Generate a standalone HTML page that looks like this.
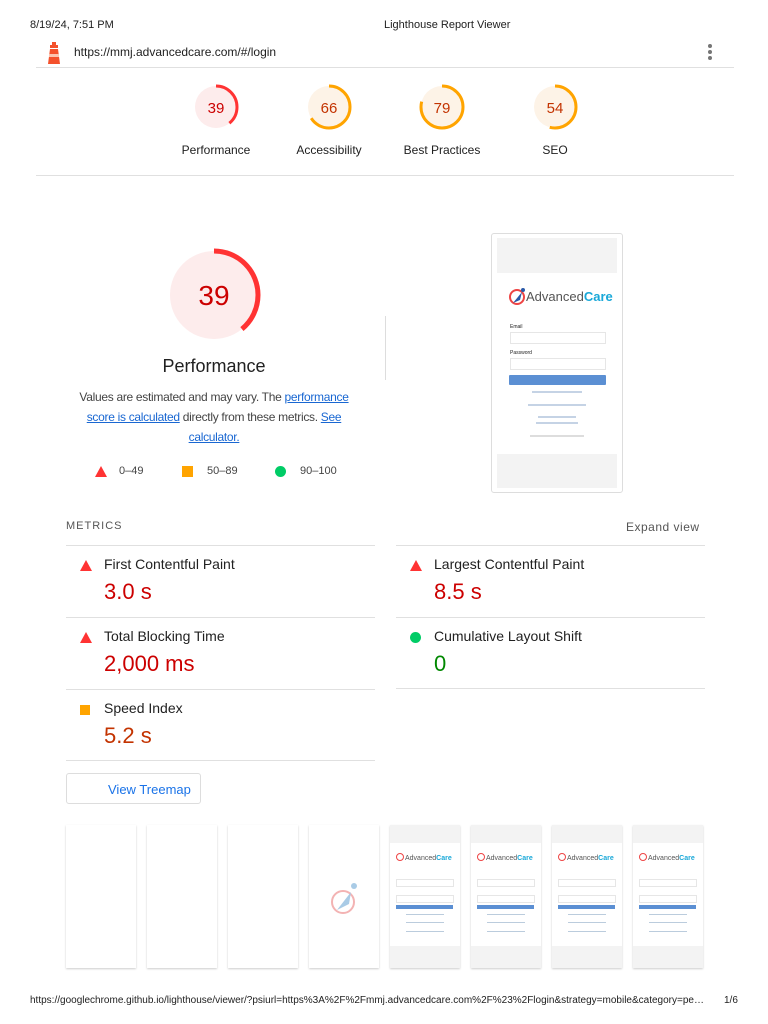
<!DOCTYPE html>
<html><head><meta charset="utf-8"><style>
body{margin:0;width:768px;height:1024px;background:#fff;font-family:"Liberation Sans",Arial,sans-serif;position:relative;overflow:hidden;color:#212121}
.a{position:absolute}
.lbl{font-size:12px;color:#212121;text-align:center;width:120px}
.mrow{position:absolute;border-top:1px solid #e0e0e0;width:309px}
.mname{position:absolute;left:38px;top:10px;font-size:14px;color:#212121}
.mval{position:absolute;left:38px;top:33px;font-size:22px}
.tri{position:absolute;left:14px;top:14px;width:0;height:0;border-left:6px solid transparent;border-right:6px solid transparent;border-bottom:11px solid #f33}
.fr{position:absolute;top:825px;width:70px;height:143px;background:#fff;box-shadow:0 1px 2px rgba(0,0,0,.2)}
.ss{position:absolute;left:0;right:0;top:0;height:18px;background:#f3f3f3}
.sb{position:absolute;left:0;right:0;bottom:0;height:22px;background:#f3f3f3}
.lg{position:absolute;left:6px;top:28px;font-size:7px;color:#555;white-space:nowrap}
.lg b{color:#19a8d8}
.dot{display:inline-block;width:6px;height:6px;border:1px solid #e44;border-radius:50%;vertical-align:-1px;margin-right:1px}
.in{position:absolute;left:6px;width:56px;height:6px;border:1px solid #e6e6e6}
.bt{position:absolute;left:6px;width:57px;height:4px;background:#5b8fd3;top:80px}
.ln{position:absolute;left:16px;width:38px;height:1px;background:#bcd}
</style></head><body>
<div class="a" style="left:30px;top:19px;font-size:11px">8/19/24, 7:51 PM</div>
<div class="a" style="left:384px;top:19px;font-size:11px">Lighthouse Report Viewer</div>
<svg class="a" style="left:46px;top:42px" width="16" height="22" viewBox="0 0 16 22"><rect x="6" y="0" width="4" height="3" fill="#f4512c"/><rect x="4" y="3" width="8" height="3" fill="#f4512c"/><polygon points="4,7 12,7 14,22 2,22" fill="#f4512c"/><rect x="3" y="12" width="10" height="3" fill="#fbc4b0"/></svg>
<div class="a" style="left:74px;top:45px;font-size:12px">https://mmj.advancedcare.com/#/login</div>
<div class="a" style="left:708px;top:44px;width:4px;height:4px;border-radius:2px;background:#757575;box-shadow:0 6px 0 #757575,0 12px 0 #757575"></div>
<div class="a" style="left:36px;top:67px;width:698px;height:1px;background:#e0e0e0"></div>
<svg class="a" style="left:0;top:0" width="768" height="180">
<g fill="none" stroke-width="3">
<circle cx="216" cy="107" r="21" fill="#fdecec" stroke="none"/><circle cx="216" cy="107" r="21" stroke="#f33" stroke-dasharray="51.4 200" transform="rotate(-90 216 107)"/>
<circle cx="329" cy="107" r="21" fill="#fdf3e7" stroke="none"/><circle cx="329" cy="107" r="21" stroke="#ffa400" stroke-dasharray="87 200" transform="rotate(-90 329 107)"/>
<circle cx="442" cy="107" r="21" fill="#fdf3e7" stroke="none"/><circle cx="442" cy="107" r="21" stroke="#ffa400" stroke-dasharray="104.2 200" transform="rotate(-90 442 107)"/>
<circle cx="555" cy="107" r="21" fill="#fdf3e7" stroke="none"/><circle cx="555" cy="107" r="21" stroke="#ffa400" stroke-dasharray="71.2 200" transform="rotate(-90 555 107)"/>
</g>
<g font-family="Liberation Sans" font-size="15" text-anchor="middle"><text x="216" y="113" fill="#c00">39</text><text x="329" y="113" fill="#c33300">66</text><text x="442" y="113" fill="#c33300">79</text><text x="555" y="113" fill="#c33300">54</text></g>
</svg>
<div class="a lbl" style="left:156px;top:143px">Performance</div>
<div class="a lbl" style="left:269px;top:143px">Accessibility</div>
<div class="a lbl" style="left:382px;top:143px">Best Practices</div>
<div class="a lbl" style="left:495px;top:143px">SEO</div>
<div class="a" style="left:36px;top:175px;width:698px;height:1px;background:#e0e0e0"></div>
<svg class="a" style="left:160px;top:240px" width="110" height="110"><circle cx="54" cy="55" r="44" fill="#fdecec"/><circle cx="54" cy="55" r="44" fill="none" stroke="#f33" stroke-width="5" stroke-dasharray="107.8 400" transform="rotate(-90 54 55)"/><text x="54" y="65" text-anchor="middle" font-family="Liberation Sans" font-size="28" fill="#c00">39</text></svg>
<div class="a" style="left:114px;top:356px;width:200px;text-align:center;font-size:18px">Performance</div>
<div class="a" style="left:64px;top:387px;width:300px;text-align:center;font-size:12px;line-height:20px;color:#444;letter-spacing:-0.3px;white-space:nowrap">Values are estimated and may vary. The <u style="color:#1967d2">performance</u><br><u style="color:#1967d2">score is calculated</u> directly from these metrics. <u style="color:#1967d2">See</u><br><u style="color:#1967d2">calculator.</u></div>
<div class="a" style="left:95px;top:466px;width:0;height:0;border-left:6px solid transparent;border-right:6px solid transparent;border-bottom:11px solid #f33"></div>
<div class="a" style="left:119px;top:465px;font-size:11px;color:#444">0–49</div>
<div class="a" style="left:182px;top:466px;width:11px;height:11px;background:#ffa400"></div>
<div class="a" style="left:207px;top:465px;font-size:11px;color:#444">50–89</div>
<div class="a" style="left:275px;top:466px;width:11px;height:11px;border-radius:6px;background:#0c6"></div>
<div class="a" style="left:300px;top:465px;font-size:11px;color:#444">90–100</div>
<div class="a" style="left:385px;top:316px;width:1px;height:64px;background:#ddd"></div>
<div class="a" style="left:491px;top:233px;width:130px;height:258px;border:1px solid #ddd;border-radius:3px;background:#fff">
<div class="a" style="left:5px;top:4px;width:120px;height:35px;background:#f3f3f3"></div>
<svg class="a" style="left:16px;top:52px" width="20" height="20"><circle cx="9" cy="11" r="7" fill="none" stroke="#e44" stroke-width="2"/><path d="M5 17 L14 6 L12 14Z" fill="#2a5aa8"/><circle cx="15" cy="4" r="2" fill="#2a5aa8"/></svg>
<div class="a" style="left:34px;top:55px;font-size:13px;color:#555;white-space:nowrap">Advanced<b style="color:#19a8d8">Care</b></div>
<div class="a" style="left:18px;top:90px;font-size:5px">Email</div>
<div class="a" style="left:18px;top:98px;width:94px;height:10px;border:1px solid #e6e6e6"></div>
<div class="a" style="left:18px;top:116px;font-size:5px">Password</div>
<div class="a" style="left:18px;top:124px;width:94px;height:10px;border:1px solid #e6e6e6"></div>
<div class="a" style="left:17px;top:141px;width:97px;height:10px;background:#5b8fd3;border-radius:1px"></div>
<div class="a" style="left:40px;top:157px;width:50px;height:2px;background:#c5d3e5"></div>
<div class="a" style="left:36px;top:170px;width:58px;height:2px;background:#c5d3e5"></div>
<div class="a" style="left:46px;top:182px;width:38px;height:2px;background:#c5d3e5"></div>
<div class="a" style="left:44px;top:188px;width:42px;height:2px;background:#c5d3e5"></div>
<div class="a" style="left:38px;top:201px;width:54px;height:2px;background:#ddd"></div>
<div class="a" style="left:5px;top:220px;width:120px;height:34px;background:#f3f3f3"></div>
</div>
<div class="a" style="left:66px;top:520px;font-size:11px;letter-spacing:1px;color:#555">METRICS</div>
<div class="a" style="left:626px;top:520px;font-size:12px;letter-spacing:.5px;color:#555">Expand view</div>
<div class="mrow" style="left:66px;top:545px;height:72px"><div class="tri"></div><div class="mname">First Contentful Paint</div><div class="mval" style="color:#c00">3.0 s</div></div>
<div class="mrow" style="left:66px;top:617px;height:72px"><div class="tri"></div><div class="mname">Total Blocking Time</div><div class="mval" style="color:#c00">2,000 ms</div></div>
<div class="mrow" style="left:66px;top:689px;height:70px;border-bottom:1px solid #e0e0e0"><div class="a" style="left:14px;top:15px;width:10px;height:10px;background:#ffa400"></div><div class="mname">Speed Index</div><div class="mval" style="color:#c33300">5.2 s</div></div>
<div class="mrow" style="left:396px;top:545px;height:72px"><div class="tri"></div><div class="mname">Largest Contentful Paint</div><div class="mval" style="color:#c00">8.5 s</div></div>
<div class="mrow" style="left:396px;top:617px;height:70px;border-bottom:1px solid #e0e0e0"><div class="a" style="left:14px;top:14px;width:11px;height:11px;border-radius:6px;background:#0c6"></div><div class="mname">Cumulative Layout Shift</div><div class="mval" style="color:#080">0</div></div>
<div class="a" style="left:66px;top:773px;width:133px;height:29px;border:1px solid #ddd;border-radius:3px;background:#fff"><div class="a" style="left:41px;top:8px;font-size:13px;color:#1a73e8">View Treemap</div></div>
<div class="fr" style="left:66px"></div><div class="fr" style="left:147px"></div><div class="fr" style="left:228px"></div>
<div class="fr" style="left:309px"><svg class="a" style="left:22px;top:55px" width="28" height="36"><circle cx="12" cy="22" r="11" fill="none" stroke="#f3b3b3" stroke-width="2"/><path d="M6 30 L20 12 L18 24Z" fill="#a9cbe6"/><circle cx="23" cy="6" r="3" fill="#a9cbe6"/></svg></div>
<div class="fr" style="left:390px"><div class="ss"></div><div class="lg"><span class="dot"></span>Advanced<b>Care</b></div><div class="in" style="top:54px"></div><div class="in" style="top:70px"></div><div class="bt"></div><div class="ln" style="top:89px"></div><div class="ln" style="top:97px"></div><div class="ln" style="top:106px"></div><div class="sb"></div></div>
<div class="fr" style="left:471px"><div class="ss"></div><div class="lg"><span class="dot"></span>Advanced<b>Care</b></div><div class="in" style="top:54px"></div><div class="in" style="top:70px"></div><div class="bt"></div><div class="ln" style="top:89px"></div><div class="ln" style="top:97px"></div><div class="ln" style="top:106px"></div><div class="sb"></div></div>
<div class="fr" style="left:552px"><div class="ss"></div><div class="lg"><span class="dot"></span>Advanced<b>Care</b></div><div class="in" style="top:54px"></div><div class="in" style="top:70px"></div><div class="bt"></div><div class="ln" style="top:89px"></div><div class="ln" style="top:97px"></div><div class="ln" style="top:106px"></div><div class="sb"></div></div>
<div class="fr" style="left:633px"><div class="ss"></div><div class="lg"><span class="dot"></span>Advanced<b>Care</b></div><div class="in" style="top:54px"></div><div class="in" style="top:70px"></div><div class="bt"></div><div class="ln" style="top:89px"></div><div class="ln" style="top:97px"></div><div class="ln" style="top:106px"></div><div class="sb"></div></div>
<div class="a" style="left:30px;top:995px;font-size:10px;white-space:nowrap;width:680px;overflow:hidden">https://googlechrome.github.io/lighthouse/viewer/?psiurl=https%3A%2F%2Fmmj.advancedcare.com%2F%23%2Flogin&amp;strategy=mobile&amp;category=pe…</div>
<div class="a" style="left:724px;top:995px;font-size:10px">1/6</div>
</body></html>
